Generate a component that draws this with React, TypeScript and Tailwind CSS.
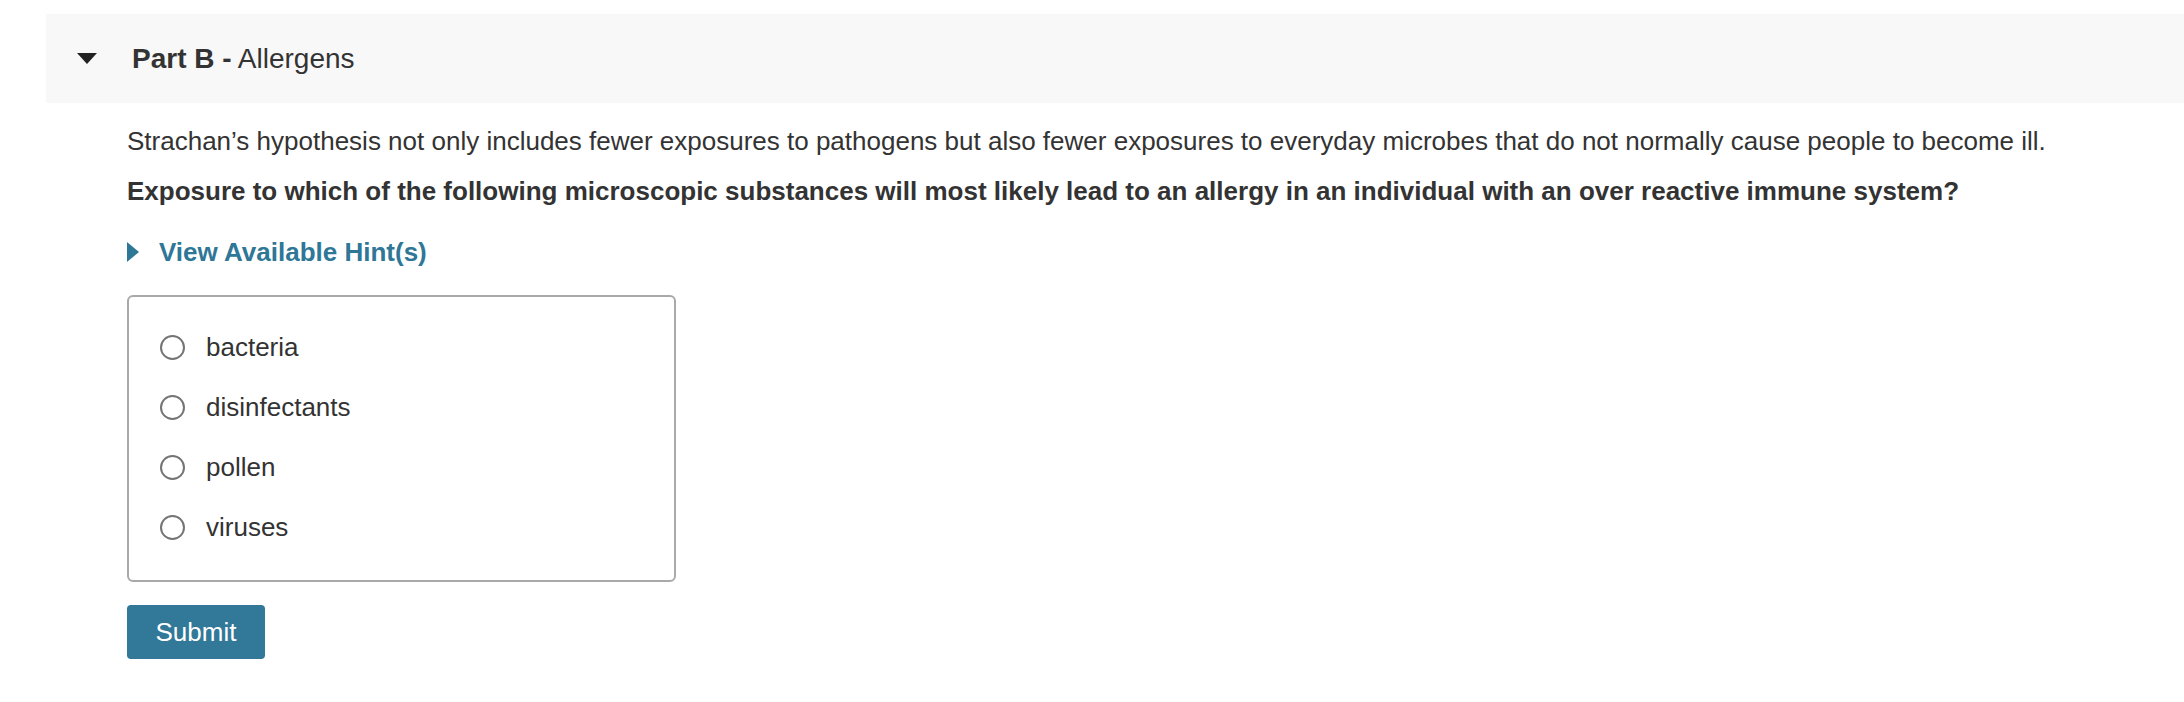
import { useState } from 'react';

const options = ['bacteria', 'disinfectants', 'pollen', 'viruses'];

export default function App() {
  const [choice, setChoice] = useState<string | null>(null);

  return (
    <div className="min-h-[702px] bg-white pl-[46px] pt-[14px] font-['Liberation_Sans',Arial,sans-serif] text-[#333]">
      {/* part header */}
      <div className="flex h-[89px] items-center bg-[#f8f8f8] pl-[31px]">
        <svg width="20" height="11" viewBox="0 0 20 11" className="shrink-0">
          <polygon points="0,0 20,0 10,11" fill="#222" />
        </svg>
        <span className="ml-[35px] text-[28px] leading-none">
          <b className="font-bold">Part B -</b> Allergens
        </span>
      </div>

      <div className="pl-[81px]">
        <p className="mt-[20px] text-[26px] leading-[36px]">
          Strachan’s hypothesis not only includes fewer exposures to pathogens but also fewer exposures to everyday microbes that do not normally cause people to become ill.
        </p>
        <p className="mt-[14px] text-[26px] font-bold leading-[36px]">
          Exposure to which of the following microscopic substances will most likely lead to an allergy in an individual with an over reactive immune system?
        </p>

        <button className="mt-[25px] flex h-[36px] items-center text-[26px] font-bold text-[#2f7797]">
          <svg width="12" height="20" viewBox="0 0 12 20" className="shrink-0">
            <polygon points="0,0 12,10 0,20" fill="#2f7797" />
          </svg>
          <span className="ml-[20px]">View Available Hint(s)</span>
        </button>

        <div className="mt-[25px] box-border h-[287px] w-[549px] rounded-[6px] border-2 border-[#a9a9a9] pl-[31px] pt-[20px]">
          {options.map(o => (
            <label key={o} className="flex h-[60px] cursor-pointer items-center text-[26px]" onClick={() => setChoice(o)}>
              <span className="flex h-[25px] w-[25px] shrink-0 items-center justify-center rounded-full border-2 border-[#747474] bg-white">
                {choice === o && <span className="h-[13px] w-[13px] rounded-full bg-[#2f7797]" />}
              </span>
              <span className="ml-[21px]">{o}</span>
            </label>
          ))}
        </div>

        <button className="mt-[23px] h-[54px] w-[138px] rounded-[4px] bg-[#327898] text-[26px] text-white">
          Submit
        </button>
      </div>
    </div>
  );
}
